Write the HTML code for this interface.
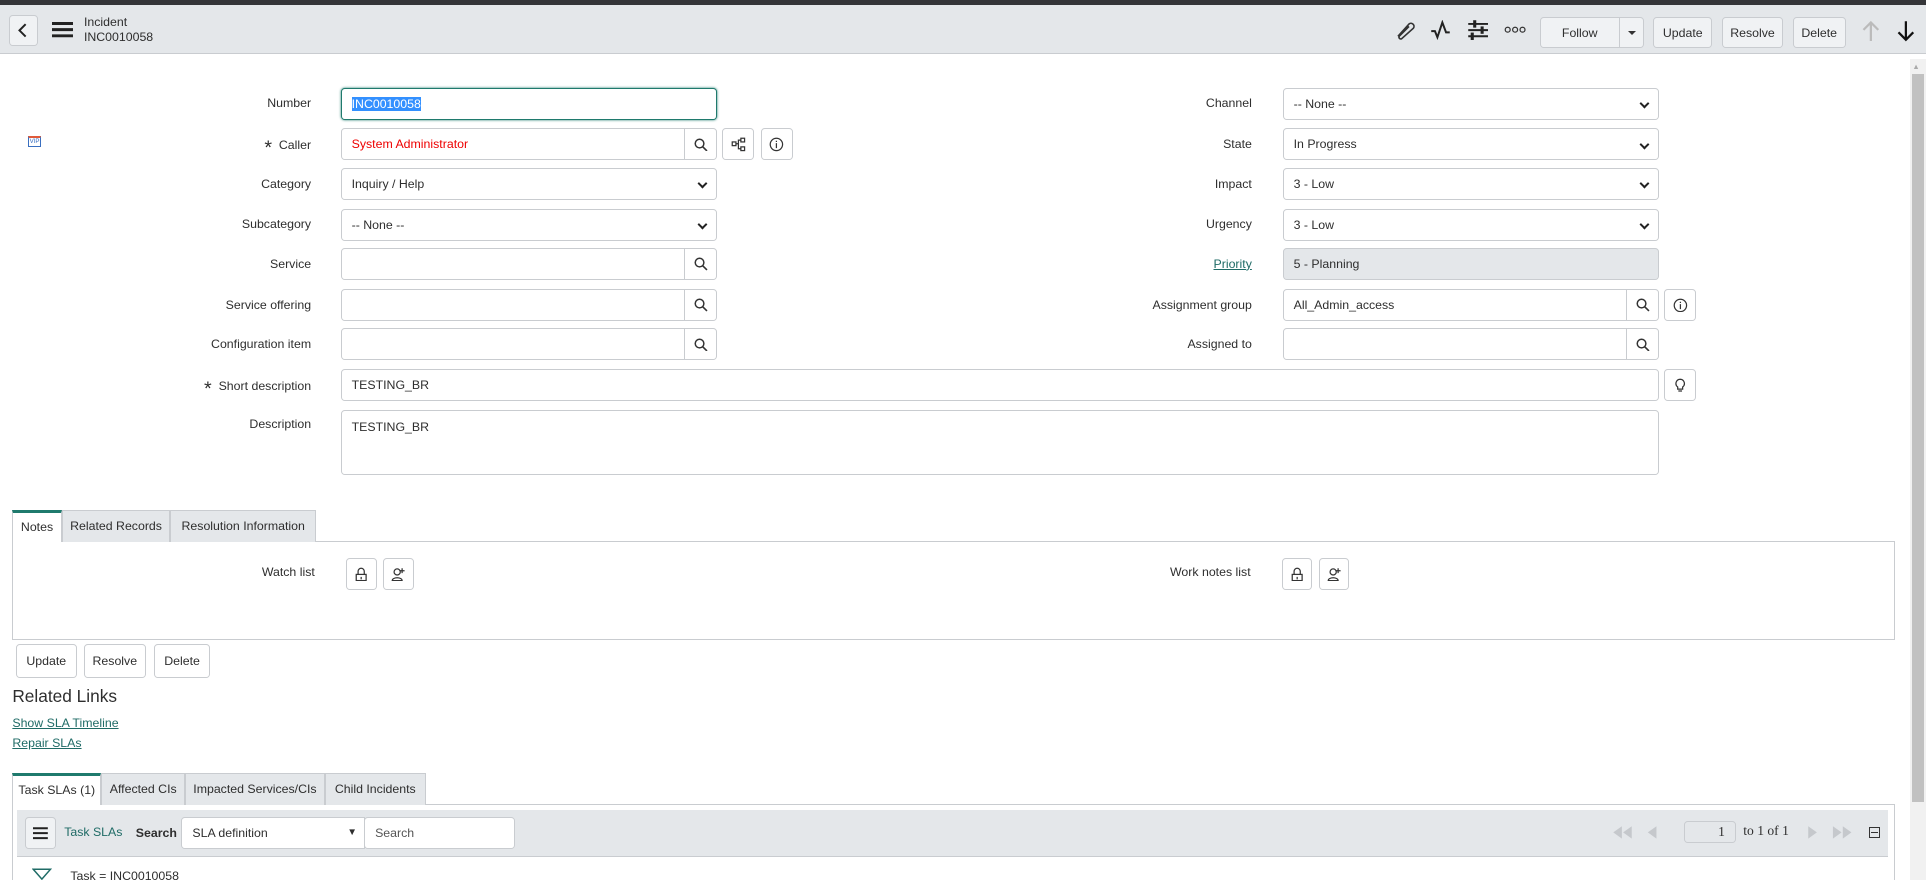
<!DOCTYPE html>
<html><head><style>
*{box-sizing:border-box}
html,body{margin:0;padding:0;width:1926px;height:880px;overflow:hidden;background:#fff}
#w{zoom:1.2346;width:1560px;height:713px;position:relative;font-family:"Liberation Sans",sans-serif;font-size:10px;color:#2e2e2e}
.a{position:absolute}
.btn{position:absolute;border:1px solid #c9ccd0;border-radius:3px;background:#fff;display:flex;align-items:center;justify-content:center;font-size:10px;color:#2e2e2e}
.hb{background:#f0f2f4}
.lbl{position:absolute;text-align:right;width:200px;font-size:10px}
.inp{position:absolute;border:1px solid #c9ccd0;border-radius:3px;background:#fff;height:26px;display:flex;align-items:center;padding-left:8px;font-size:10px}
.sel:after{content:"";position:absolute;right:8px;top:9px;width:4px;height:4px;border-right:2px solid #222;border-bottom:2px solid #222;transform:rotate(45deg)}
.sb{position:absolute;right:0;top:0;bottom:0;width:26px;border-left:1px solid #c9ccd0;display:flex;align-items:center;justify-content:center}
.tab{position:absolute;height:25px;background:#e4e7ea;border:1px solid #c9ccd0;border-bottom:none;display:flex;align-items:center;justify-content:center;font-size:10px}
.tab.on{background:#fff;border-top:3px solid #1f7a6d}
a{color:#1f6b66}
</style></head><body><div id="w">
<div class="a" style="left:0;top:0;width:1560px;height:4px;background:#343538"></div>
<div class="a" style="left:0;top:4px;width:1560px;height:40px;background:#e4e7ea;border-bottom:1px solid #c9ccd0"></div>
<div class="btn hb" style="left:7px;top:12px;width:24px;height:25px"><svg width="10" height="12"><path d="M7 1L2 6l5 5" stroke="#222" stroke-width="1.6" fill="none"/></svg></div>
<svg class="a" style="left:42px;top:17px" width="17" height="14"><path d="M0 2h17M0 7h17M0 12h17" stroke="#222" stroke-width="2.4"/></svg>
<div class="a" style="left:68px;top:12px;line-height:12px">Incident<br>INC0010058</div>
<svg class="a" style="left:1128px;top:15px" width="18" height="18"><path d="M4 14L13 4a2.5 2.5 0 0 1 3.5 3.5L7 16a1.5 1.5 0 0 1-2-2l8-8" stroke="#333" stroke-width="1.3" fill="none"/></svg>
<svg class="a" style="left:1158px;top:16px" width="18" height="16"><path d="M1 9h3l2 5 4-12 3 8h3" stroke="#222" stroke-width="1.6" fill="none"/></svg>
<svg class="a" style="left:1188px;top:15px" width="18" height="18"><path d="M1 4h16M1 9h16M1 14h16" stroke="#222" stroke-width="1.6"/><rect x="5" y="1" width="2.5" height="6" fill="#222"/><rect x="11" y="6" width="2.5" height="6" fill="#222"/><rect x="3" y="11" width="2.5" height="6" fill="#222"/></svg>
<svg class="a" style="left:1218px;top:21px" width="18" height="6"><circle cx="3" cy="3" r="2" stroke="#333" fill="none"/><circle cx="9" cy="3" r="2" stroke="#333" fill="none"/><circle cx="15" cy="3" r="2" stroke="#333" fill="none"/></svg>
<div class="btn hb" style="left:1247px;top:14px;width:85px;height:25px;justify-content:flex-start"><span style="width:64px;text-align:center">Follow</span><span style="border-left:1px solid #c9ccd0;height:100%;width:20px;display:flex;align-items:center;justify-content:center"><span style="border:4px solid transparent;border-top:4px solid #333;margin-top:4px"></span></span></div>
<div class="btn hb" style="left:1339px;top:14px;width:48px;height:25px">Update</div>
<div class="btn hb" style="left:1395px;top:14px;width:49px;height:25px">Resolve</div>
<div class="btn hb" style="left:1452px;top:14px;width:43px;height:25px">Delete</div>
<svg class="a" style="left:1507px;top:16px" width="16" height="18"><path d="M8 17V2M2 8l6-6 6 6" stroke="#bbb" stroke-width="1.8" fill="none"/></svg>
<svg class="a" style="left:1536px;top:16px" width="16" height="18"><path d="M8 1v15M2 10l6 6 6-6" stroke="#111" stroke-width="1.8" fill="none"/></svg>
<div class="a" style="left:1547px;top:48px;width:13px;height:665px;background:#f1f1f1"></div>
<div class="a" style="left:1549px;top:60px;width:9px;height:590px;background:#c1c1c1"></div>
<div class="a" style="left:1549px;top:50px;font-size:6px;color:#aaa">▲</div>
<div class="a" style="left:23px;top:110px;width:10px;height:9px;border:1px solid #3a6fc0;border-top:2px solid #e05a3a;font-size:5px;color:#3a6fc0;line-height:6px;text-align:center">VIP</div>

<div class="lbl" style="left:52px;top:78px">Number</div>
<div class="inp" style="left:276px;top:71px;width:305px;border:1px solid #1f7a6d;box-shadow:0 0 2px #1f7a6d"><span style="background:#3390ff;color:#fff">INC0010058</span></div>
<div class="lbl" style="left:52px;top:111px"><span style="font-size:16px;vertical-align:-4px">*</span>&nbsp; Caller</div>
<div class="inp" style="left:276px;top:104px;width:305px;color:#e00">System Administrator<div class="sb"><svg width="11" height="11"><circle cx="4.5" cy="4.5" r="3.5" stroke="#333" fill="none" stroke-width="1.2"/><path d="M7 7l3.5 3.5" stroke="#333" stroke-width="1.3"/></svg></div></div>
<div class="btn" style="left:585px;top:104px;width:26px;height:26px"><svg width="12" height="12"><rect x="1" y="4" width="3" height="3" stroke="#333" fill="none"/><rect x="8" y="1" width="3" height="3" stroke="#333" fill="none"/><rect x="8" y="8" width="3" height="3" stroke="#333" fill="none"/><path d="M4 5.5h2v-3h2M6 5.5v4h2" stroke="#333" fill="none"/></svg></div>
<div class="btn" style="left:616px;top:104px;width:26px;height:26px"><svg width="12" height="12"><circle cx="6" cy="6" r="5" stroke="#333" fill="none"/><path d="M6 5v4M6 3v1" stroke="#333"/></svg></div>
<div class="lbl" style="left:52px;top:143px">Category</div>
<div class="inp sel" style="left:276px;top:136px;width:305px">Inquiry / Help</div>
<div class="lbl" style="left:52px;top:176px">Subcategory</div>
<div class="inp sel" style="left:276px;top:169px;width:305px">-- None --</div>
<div class="lbl" style="left:52px;top:208px">Service</div>
<div class="inp" style="left:276px;top:201px;width:305px"><div class="sb"><svg width="11" height="11"><circle cx="4.5" cy="4.5" r="3.5" stroke="#333" fill="none" stroke-width="1.2"/><path d="M7 7l3.5 3.5" stroke="#333" stroke-width="1.3"/></svg></div></div>
<div class="lbl" style="left:52px;top:241px">Service offering</div>
<div class="inp" style="left:276px;top:234px;width:305px"><div class="sb"><svg width="11" height="11"><circle cx="4.5" cy="4.5" r="3.5" stroke="#333" fill="none" stroke-width="1.2"/><path d="M7 7l3.5 3.5" stroke="#333" stroke-width="1.3"/></svg></div></div>
<div class="lbl" style="left:52px;top:273px">Configuration item</div>
<div class="inp" style="left:276px;top:266px;width:305px"><div class="sb"><svg width="11" height="11"><circle cx="4.5" cy="4.5" r="3.5" stroke="#333" fill="none" stroke-width="1.2"/><path d="M7 7l3.5 3.5" stroke="#333" stroke-width="1.3"/></svg></div></div>
<div class="lbl" style="left:52px;top:306px"><span style="font-size:16px;vertical-align:-4px">*</span>&nbsp; Short description</div>
<div class="inp" style="left:276px;top:299px;width:1068px">TESTING_BR</div>
<div class="btn" style="left:1348px;top:299px;width:26px;height:26px"><svg width="10" height="12"><path d="M5 1a3.5 3.5 0 0 0-2 6.3V9h4V7.3A3.5 3.5 0 0 0 5 1zM3.5 10.5h3" stroke="#333" fill="none"/></svg></div>
<div class="lbl" style="left:52px;top:338px">Description</div>
<div class="inp" style="left:276px;top:332px;width:1068px;height:53px;align-items:flex-start;padding-top:7px">TESTING_BR</div>

<div class="lbl" style="left:814px;top:78px">Channel</div>
<div class="inp sel" style="left:1039px;top:71px;width:305px">-- None --</div>
<div class="lbl" style="left:814px;top:111px">State</div>
<div class="inp sel" style="left:1039px;top:104px;width:305px">In Progress</div>
<div class="lbl" style="left:814px;top:143px">Impact</div>
<div class="inp sel" style="left:1039px;top:136px;width:305px">3 - Low</div>
<div class="lbl" style="left:814px;top:176px">Urgency</div>
<div class="inp sel" style="left:1039px;top:169px;width:305px">3 - Low</div>
<div class="lbl" style="left:814px;top:208px"><a style="text-decoration:underline">Priority</a></div>
<div class="inp" style="left:1039px;top:201px;width:305px;background:#e4e7ea">5 - Planning</div>
<div class="lbl" style="left:814px;top:241px">Assignment group</div>
<div class="inp" style="left:1039px;top:234px;width:305px">All_Admin_access<div class="sb"><svg width="11" height="11"><circle cx="4.5" cy="4.5" r="3.5" stroke="#333" fill="none" stroke-width="1.2"/><path d="M7 7l3.5 3.5" stroke="#333" stroke-width="1.3"/></svg></div></div>
<div class="btn" style="left:1348px;top:234px;width:26px;height:26px"><svg width="12" height="12"><circle cx="6" cy="6" r="5" stroke="#333" fill="none"/><path d="M6 5v4M6 3v1" stroke="#333"/></svg></div>
<div class="lbl" style="left:814px;top:273px">Assigned to</div>
<div class="inp" style="left:1039px;top:266px;width:305px"><div class="sb"><svg width="11" height="11"><circle cx="4.5" cy="4.5" r="3.5" stroke="#333" fill="none" stroke-width="1.2"/><path d="M7 7l3.5 3.5" stroke="#333" stroke-width="1.3"/></svg></div></div>

<div class="a" style="left:10px;top:438px;width:1525px;height:80px;border:1px solid #c9ccd0"></div>
<div class="tab on" style="left:10px;top:413px;width:40px;height:26px">Notes</div>
<div class="tab" style="left:50px;top:413px;width:88px;height:26px">Related Records</div>
<div class="tab" style="left:138px;top:413px;width:118px;height:26px">Resolution Information</div>
<div class="lbl" style="left:55px;top:458px">Watch list</div>
<div class="btn" style="left:280px;top:452px;width:25px;height:26px"><svg width="10" height="12"><path d="M2.5 6V3.5a2.5 2.5 0 0 1 5 0V6" stroke="#333" fill="none"/><rect x="1" y="6" width="8" height="5" stroke="#333" fill="none"/><rect x="4.5" y="8" width="1" height="2" fill="#333"/></svg></div>
<div class="btn" style="left:310px;top:452px;width:25px;height:26px"><svg width="12" height="12"><circle cx="5" cy="4" r="2.5" stroke="#333" fill="none"/><path d="M1 11c0-3 8-3 8 0zM9 1v4M7 3h4" stroke="#333" fill="none"/></svg></div>
<div class="lbl" style="left:813px;top:458px">Work notes list</div>
<div class="btn" style="left:1038px;top:452px;width:25px;height:26px"><svg width="10" height="12"><path d="M2.5 6V3.5a2.5 2.5 0 0 1 5 0V6" stroke="#333" fill="none"/><rect x="1" y="6" width="8" height="5" stroke="#333" fill="none"/><rect x="4.5" y="8" width="1" height="2" fill="#333"/></svg></div>
<div class="btn" style="left:1068px;top:452px;width:25px;height:26px"><svg width="12" height="12"><circle cx="5" cy="4" r="2.5" stroke="#333" fill="none"/><path d="M1 11c0-3 8-3 8 0zM9 1v4M7 3h4" stroke="#333" fill="none"/></svg></div>

<div class="btn" style="left:13px;top:522px;width:49px;height:27px">Update</div>
<div class="btn" style="left:68px;top:522px;width:50px;height:27px">Resolve</div>
<div class="btn" style="left:125px;top:522px;width:45px;height:27px">Delete</div>
<div class="a" style="left:10px;top:556px;font-size:14px">Related Links</div>
<div class="a" style="left:10px;top:580px"><a style="text-decoration:underline">Show SLA Timeline</a></div>
<div class="a" style="left:10px;top:596px"><a style="text-decoration:underline">Repair SLAs</a></div>

<div class="a" style="left:10px;top:651px;width:1525px;height:70px;border:1px solid #c9ccd0"></div>
<div class="tab on" style="left:10px;top:626px;width:72px;height:26px">Task SLAs (1)</div>
<div class="tab" style="left:82px;top:626px;width:68px;height:26px">Affected CIs</div>
<div class="tab" style="left:150px;top:626px;width:113px;height:26px">Impacted Services/CIs</div>
<div class="tab" style="left:263px;top:626px;width:82px;height:26px">Child Incidents</div>
<div class="a" style="left:14px;top:656px;width:1515px;height:38px;background:#e4e7ea;border-bottom:1px solid #c9ccd0"></div>
<div class="btn hb" style="left:20px;top:662px;width:25px;height:26px"><svg width="12" height="10"><path d="M0 1h12M0 5h12M0 9h12" stroke="#222" stroke-width="1.6"/></svg></div>
<div class="a" style="left:52px;top:668px;color:#1f6b66">Task SLAs</div>
<div class="a" style="left:110px;top:669px;font-weight:bold">Search</div>
<div class="inp" style="left:147px;top:662px;width:149px;height:26px;border-radius:3px 0 0 3px">SLA definition<span class="a" style="right:6px;top:7px;font-size:8px">▼</span></div>
<div class="inp" style="left:295px;top:662px;width:122px;height:26px;color:#555">Search</div>
<svg class="a" style="left:1306px;top:668px" width="44" height="12"><path d="M8 1L1 6l7 5zM16 1L9 6l7 5zM36 1l-7 5 7 5z" fill="#c5c8cc"/></svg>
<div class="a" style="left:1364px;top:665px;width:42px;height:18px;border:1px solid #c9ccd0;border-radius:3px;text-align:right;padding-right:8px;line-height:16px;font-family:'Liberation Serif',serif;font-size:11px">1</div>
<div class="a" style="left:1412px;top:667px;font-family:'Liberation Serif',serif;font-size:11px">to 1 of 1</div>
<svg class="a" style="left:1464px;top:668px" width="44" height="12"><path d="M1 1l7 5-7 5zM21 1l7 5-7 5zM29 1l7 5-7 5z" fill="#c5c8cc"/></svg>
<div class="a" style="left:1514px;top:670px;width:9px;height:9px;border:1px solid #333"><div style="margin:3px 1px 0;height:1px;background:#333"></div></div>
<svg class="a" style="left:26px;top:703px" width="16" height="10"><path d="M1 1h14L8 9z" stroke="#1f6b66" fill="none" stroke-width="1.2"/></svg>
<div class="a" style="left:57px;top:704px">Task = INC0010058</div>
</div></body></html>
